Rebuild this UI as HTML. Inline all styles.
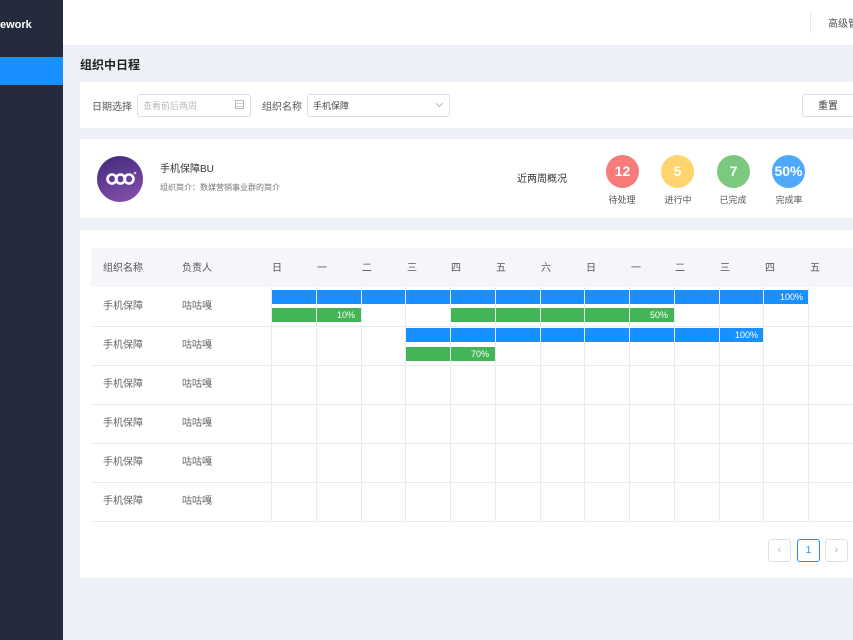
<!DOCTYPE html>
<html><head><meta charset="utf-8">
<style>
*{margin:0;padding:0;box-sizing:border-box}
body{width:853px;height:640px;overflow:hidden;background:#edf0f7;font-family:"Liberation Sans","Noto Sans CJK SC",sans-serif;position:relative;color:#333;line-height:1}
.a{position:absolute}
.t{font-size:10px;color:#555;white-space:nowrap}
.vl{position:absolute;top:287px;height:234px;width:1px;background:#e9ebf0}
.hl{position:absolute;left:91px;width:762px;height:1px;background:#e9ebf0}
.blue{position:absolute;background:#1890ff;height:14px}
.green{position:absolute;background:#43b556;height:14px}
.pct{position:absolute;font-size:9px;color:#fff;top:3px}
.circ{position:absolute;width:33px;height:33px;border-radius:50%;color:#fff;font-weight:bold;font-size:14px;text-align:center;line-height:33px;top:155px}
.cl{position:absolute;top:196px;font-size:9px;color:#555;width:40px;text-align:center}
.hd{position:absolute;top:264px;font-size:10px;color:#555}
.rn{position:absolute;left:103px;font-size:10px;color:#666}
.rp{position:absolute;left:182px;font-size:10px;color:#666}
.pg{position:absolute;top:539px;width:23px;height:23px;border:1px solid #dcdfe6;border-radius:3px;background:#fff;color:#bbb;font-size:11px;text-align:center;line-height:21px}
</style></head><body>
<div class="a" style="left:0;top:0;width:63px;height:640px;background:#232b3c"></div>
<div class="a" style="left:0;top:57px;width:63px;height:28px;background:#1890ff"></div>
<div class="a" style="left:0;top:20px;font-size:11px;font-weight:bold;color:#fff">ework</div>
<div class="a" style="left:63px;top:0;width:790px;height:45px;background:#fff"></div>
<div class="a" style="left:810px;top:13px;width:1px;height:20px;background:#e5e5e5"></div>
<div class="a t" style="left:828px;top:20px;font-size:10px;color:#555">高级管</div>
<div class="a" style="left:80px;top:59px;font-size:12px;font-weight:bold;color:#222">组织中日程</div>
<div class="a" style="left:80px;top:82px;width:773px;height:46px;background:#fff"></div>
<div class="a t" style="left:92px;top:103px">日期选择</div>
<div class="a" style="left:137px;top:94px;width:114px;height:23px;border:1px solid #dcdfe6;border-radius:3px;background:#fff"></div>
<div class="a" style="left:143px;top:102px;font-size:9px;color:#bbb">查看前后两周</div>
<div class="a" style="left:235px;top:100px;width:9px;height:9px;border:1px solid #bbb;background:repeating-linear-gradient(#fff 0 2px,#ccc 2px 3px)"></div>
<div class="a t" style="left:262px;top:103px">组织名称</div>
<div class="a" style="left:307px;top:94px;width:143px;height:23px;border:1px solid #dcdfe6;border-radius:3px;background:#fff"></div>
<div class="a" style="left:313px;top:102px;font-size:9px;color:#444">手机保障</div>
<svg class="a" style="left:435px;top:101px" width="9" height="7"><path d="M1 2l3.5 3.5L8 2" stroke="#bbb" fill="none"/></svg>
<div class="a" style="left:802px;top:94px;width:60px;height:23px;border:1px solid #dcdfe6;border-radius:3px;background:#fff"></div>
<div class="a t" style="left:818px;top:102px;color:#444">重置</div>
<div class="a" style="left:80px;top:139px;width:773px;height:79px;background:#fff"></div>
<div class="a" style="left:97px;top:156px;width:46px;height:46px;border-radius:50%;background:linear-gradient(160deg,#3e2a7a,#7a4aa5 80%,#8e55b0)"></div>
<svg class="a" style="left:104px;top:170px" width="34" height="18"><g fill="none" stroke="#fff" stroke-width="2.6"><circle cx="8" cy="9" r="4.5"/><circle cx="16.5" cy="9" r="4.5"/><circle cx="25" cy="9" r="4.5"/></g><circle cx="31" cy="3" r="1.3" fill="#ccc"/></svg>
<div class="a" style="left:160px;top:165px;font-size:10px;color:#333">手机保障BU</div>
<div class="a" style="left:160px;top:184px;font-size:8px;color:#777">组织简介：数媒营销事业群的简介</div>
<div class="a t" style="left:517px;top:175px;color:#333">近两周概况</div>
<div class="circ" style="left:606px;background:#f77b7b">12</div>
<div class="circ" style="left:661px;background:#fdd46e">5</div>
<div class="circ" style="left:717px;background:#7bc97f">7</div>
<div class="circ" style="left:772px;background:#4fa9fb">50%</div>
<div class="cl" style="left:602px">待处理</div>
<div class="cl" style="left:658px">进行中</div>
<div class="cl" style="left:713px">已完成</div>
<div class="cl" style="left:769px">完成率</div>
<div class="a" style="left:80px;top:230px;width:773px;height:348px;background:#fff"></div>
<div class="a" style="left:91px;top:248px;width:762px;height:39px;background:#f5f6fa"></div>
<div class="hd" style="left:103px">组织名称</div>
<div class="hd" style="left:182px">负责人</div>
<div class="hd" style="left:272px">日</div>
<div class="hd" style="left:317px">一</div>
<div class="hd" style="left:362px">二</div>
<div class="hd" style="left:407px">三</div>
<div class="hd" style="left:451px">四</div>
<div class="hd" style="left:496px">五</div>
<div class="hd" style="left:541px">六</div>
<div class="hd" style="left:586px">日</div>
<div class="hd" style="left:631px">一</div>
<div class="hd" style="left:675px">二</div>
<div class="hd" style="left:720px">三</div>
<div class="hd" style="left:765px">四</div>
<div class="hd" style="left:810px">五</div>
<div class="blue" style="left:271px;top:290px;width:538px"><span class="pct" style="right:6px">100%</span></div>
<div class="green" style="left:271px;top:308px;width:90px"><span class="pct" style="right:6px">10%</span></div>
<div class="green" style="left:450px;top:308px;width:224px"><span class="pct" style="right:6px">50%</span></div>
<div class="blue" style="left:406px;top:328px;width:358px"><span class="pct" style="right:6px">100%</span></div>
<div class="green" style="left:406px;top:347px;width:89px"><span class="pct" style="right:6px">70%</span></div>
<div class="vl" style="left:271px"></div><div class="vl" style="left:316px"></div><div class="vl" style="left:361px"></div><div class="vl" style="left:405px"></div><div class="vl" style="left:450px"></div><div class="vl" style="left:495px"></div><div class="vl" style="left:540px"></div><div class="vl" style="left:584px"></div><div class="vl" style="left:629px"></div><div class="vl" style="left:674px"></div><div class="vl" style="left:719px"></div><div class="vl" style="left:763px"></div><div class="vl" style="left:808px"></div>
<div class="hl" style="top:326px"></div><div class="hl" style="top:365px"></div><div class="hl" style="top:404px"></div><div class="hl" style="top:443px"></div><div class="hl" style="top:482px"></div><div class="hl" style="top:521px"></div>
<div class="rn" style="top:302px">手机保障</div><div class="rp" style="top:302px">咕咕嘎</div>
<div class="rn" style="top:341px">手机保障</div><div class="rp" style="top:341px">咕咕嘎</div>
<div class="rn" style="top:380px">手机保障</div><div class="rp" style="top:380px">咕咕嘎</div>
<div class="rn" style="top:419px">手机保障</div><div class="rp" style="top:419px">咕咕嘎</div>
<div class="rn" style="top:458px">手机保障</div><div class="rp" style="top:458px">咕咕嘎</div>
<div class="rn" style="top:497px">手机保障</div><div class="rp" style="top:497px">咕咕嘎</div>
<div class="pg" style="left:768px">‹</div>
<div class="pg" style="left:797px;border-color:#1890ff;color:#1890ff;font-size:10px">1</div>
<div class="pg" style="left:825px">›</div>
</body></html>
